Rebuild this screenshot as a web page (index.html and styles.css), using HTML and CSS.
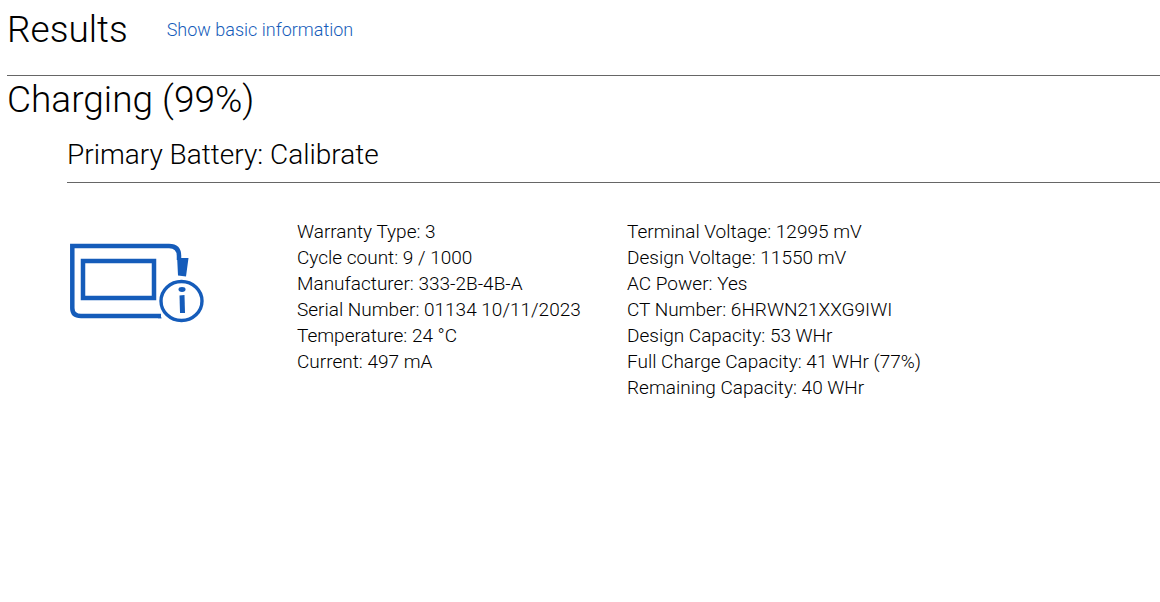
FILE: index.html
```
<!DOCTYPE html>
<html lang="en">
<head>
<meta charset="UTF-8">
<meta name="viewport" content="width=device-width, initial-scale=1.0">
<title>Results</title>
<link rel="stylesheet" href="styles.css">
</head>
<body>
<header class="header">
  <h1 class="title">Results</h1>
  <a href="#basic" class="toggle">Show basic information</a>
</header>

<main>
  <h2 class="title">Charging (99%)</h2>

  <section class="battery">
    <h3 class="battery-name">Primary Battery: Calibrate</h3>
    <div class="battery-info">
      <svg class="battery-icon" width="136" height="80" viewBox="0 0 136 80" aria-hidden="true">
        <g fill="none" stroke="#155cba" stroke-width="4.5">
          <path d="M109 17V13Q109 3 99 3H2.300V65Q2.300 73 11 73H91"/>
          <path d="M13 18H84V55H13Z"/>
          <ellipse cx="111.500" cy="58" rx="20.500" ry="19.500" stroke-width="3.400"/>
        </g>
        <g fill="#155cba">
          <path d="M107 12H111V15H118.500L116 33.500L108 32.500Z"/>
          <path d="M88 71L92 75.200H88Z"/>
          <ellipse cx="112" cy="46.500" rx="3.500" ry="2.400"/>
          <path d="M109.500 52.500L114.500 52L115 70H110Z"/>
        </g>
      </svg>
      <ul class="details">
        <li>Warranty Type: 3</li>
        <li>Cycle count: 9 / 1000</li>
        <li>Manufacturer: 333-2B-4B-A</li>
        <li>Serial Number: 01134 10/11/2023</li>
        <li>Temperature: 24 °C</li>
        <li>Current: 497 mA</li>
      </ul>
      <ul class="details">
        <li>Terminal Voltage: 12995 mV</li>
        <li>Design Voltage: 11550 mV</li>
        <li>AC Power: Yes</li>
        <li>CT Number: 6HRWN21XXG9IWI</li>
        <li>Design Capacity: 53 WHr</li>
        <li>Full Charge Capacity: 41 WHr (77%)</li>
        <li>Remaining Capacity: 40 WHr</li>
      </ul>
    </div>
  </section>
</main>
</body>
</html>
```
FILE: styles.css
```
body {
  margin: 0;
  padding: 6px 0 0 7px;
  background: #fff;
  color: #000;
  font-family: Roboto, "Liberation Sans", sans-serif;
  font-size: 19px;
  font-weight: 300;
  line-height: 26px;
}

.header {
  display: flex;
  align-items: center;
  gap: 39px;
  padding-bottom: 21px;
  border-bottom: 1px solid #666;
}

.title {
  margin: 0;
  font-size: 37px;
  font-weight: 300;
  line-height: 48px;
}

.toggle {
  color: #155cba;
  font-size: 18px;
  text-decoration: none;
}

.battery {
  padding-left: 60px;
}

.battery-name {
  margin: 0;
  padding: 13px 0 9px;
  border-bottom: 1px solid #666;
  font-size: 28px;
  font-weight: 300;
  line-height: 36px;
}

.battery-info {
  display: grid;
  grid-template-columns: 230px 330px 1fr;
  padding-top: 36px;
}

.battery-icon {
  margin: 24px 0 0 3px;
}

.details {
  margin: 0;
  padding: 0;
  list-style: none;
}
```
